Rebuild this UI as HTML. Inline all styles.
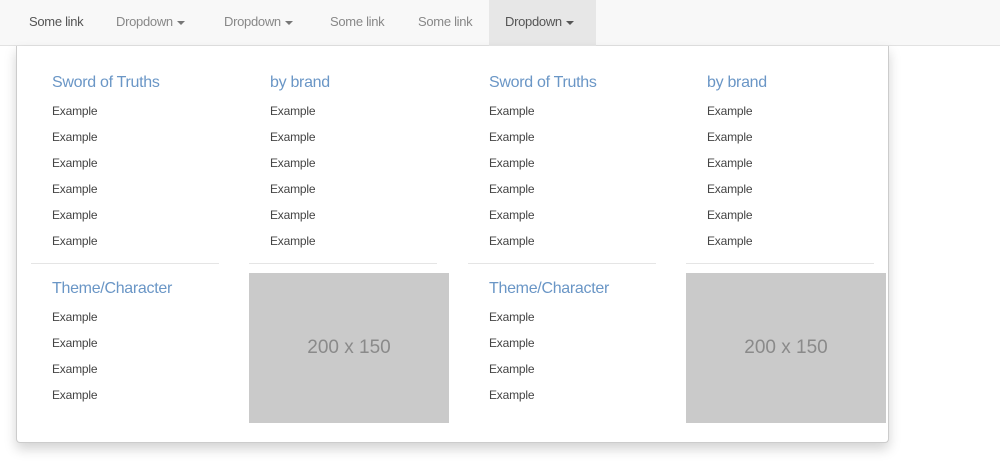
<!DOCTYPE html>
<html><head><meta charset="utf-8"><style>
*{margin:0;padding:0;box-sizing:border-box}
body{width:1000px;height:462px;background:#fff;font-family:"Liberation Sans",sans-serif;position:relative;overflow:hidden}
.nav{position:absolute;left:0;top:0;width:1000px;height:46px;background:#f8f8f8;border-bottom:1px solid #e2e2e2}
.nav span{position:absolute;top:14px;font-size:13px;color:#888;letter-spacing:-0.3px}
.caret{display:inline-block;width:0;height:0;border-left:4px solid transparent;border-right:4px solid transparent;border-top:4px solid #777;vertical-align:middle;margin-left:4px}
.act{position:absolute;left:489px;top:0;width:107px;height:46px;background:#e7e7e7}
.panel{position:absolute;left:16px;top:46px;width:873px;height:397px;background:#fff;border:1px solid #ccc;border-top:none;border-radius:0 0 4px 4px;box-shadow:0 6px 12px rgba(0,0,0,.175)}
.h{position:absolute;font-size:16px;color:#6a96c6;letter-spacing:-0.3px}
.i{position:absolute;font-size:12px;color:#444;letter-spacing:-0.2px}
.hr{position:absolute;height:1px;background:#e5e5e5;width:188px}
.img{position:absolute;width:200px;height:150px;background:#cacaca;color:#8a8a8a;font-size:19px;display:flex;align-items:center;justify-content:center}
</style></head><body>
<div class="nav">
<div class="act"></div>
<span style="left:29px;color:#555">Some link</span>
<span style="left:116px">Dropdown<i class="caret"></i></span>
<span style="left:224px">Dropdown<i class="caret"></i></span>
<span style="left:330px">Some link</span>
<span style="left:418px">Some link</span>
<span style="left:505px;color:#555">Dropdown<i class="caret" style="border-top-color:#555"></i></span>
</div>
<div class="panel"></div>
<div id="c"></div>
<script>
var xs=[31,249,468,686],html='';
xs.forEach(function(x,k){
 var hd=(k%2==0)?'Sword of Truths':'by brand';
 html+='<div class="h" style="left:'+(x+21)+'px;top:74px">'+hd+'</div>';
 for(var j=0;j<6;j++)html+='<div class="i" style="left:'+(x+21)+'px;top:'+(104+26*j)+'px">Example</div>';
 html+='<div class="hr" style="left:'+x+'px;top:263px"></div>';
 if(k%2==0){
  html+='<div class="h" style="left:'+(x+21)+'px;top:280px">Theme/Character</div>';
  for(var j=0;j<4;j++)html+='<div class="i" style="left:'+(x+21)+'px;top:'+(310+26*j)+'px">Example</div>';
 } else html+='<div class="img" style="left:'+x+'px;top:273px">200 x 150</div>';
});
document.getElementById('c').innerHTML=html;
</script>
</body></html>
